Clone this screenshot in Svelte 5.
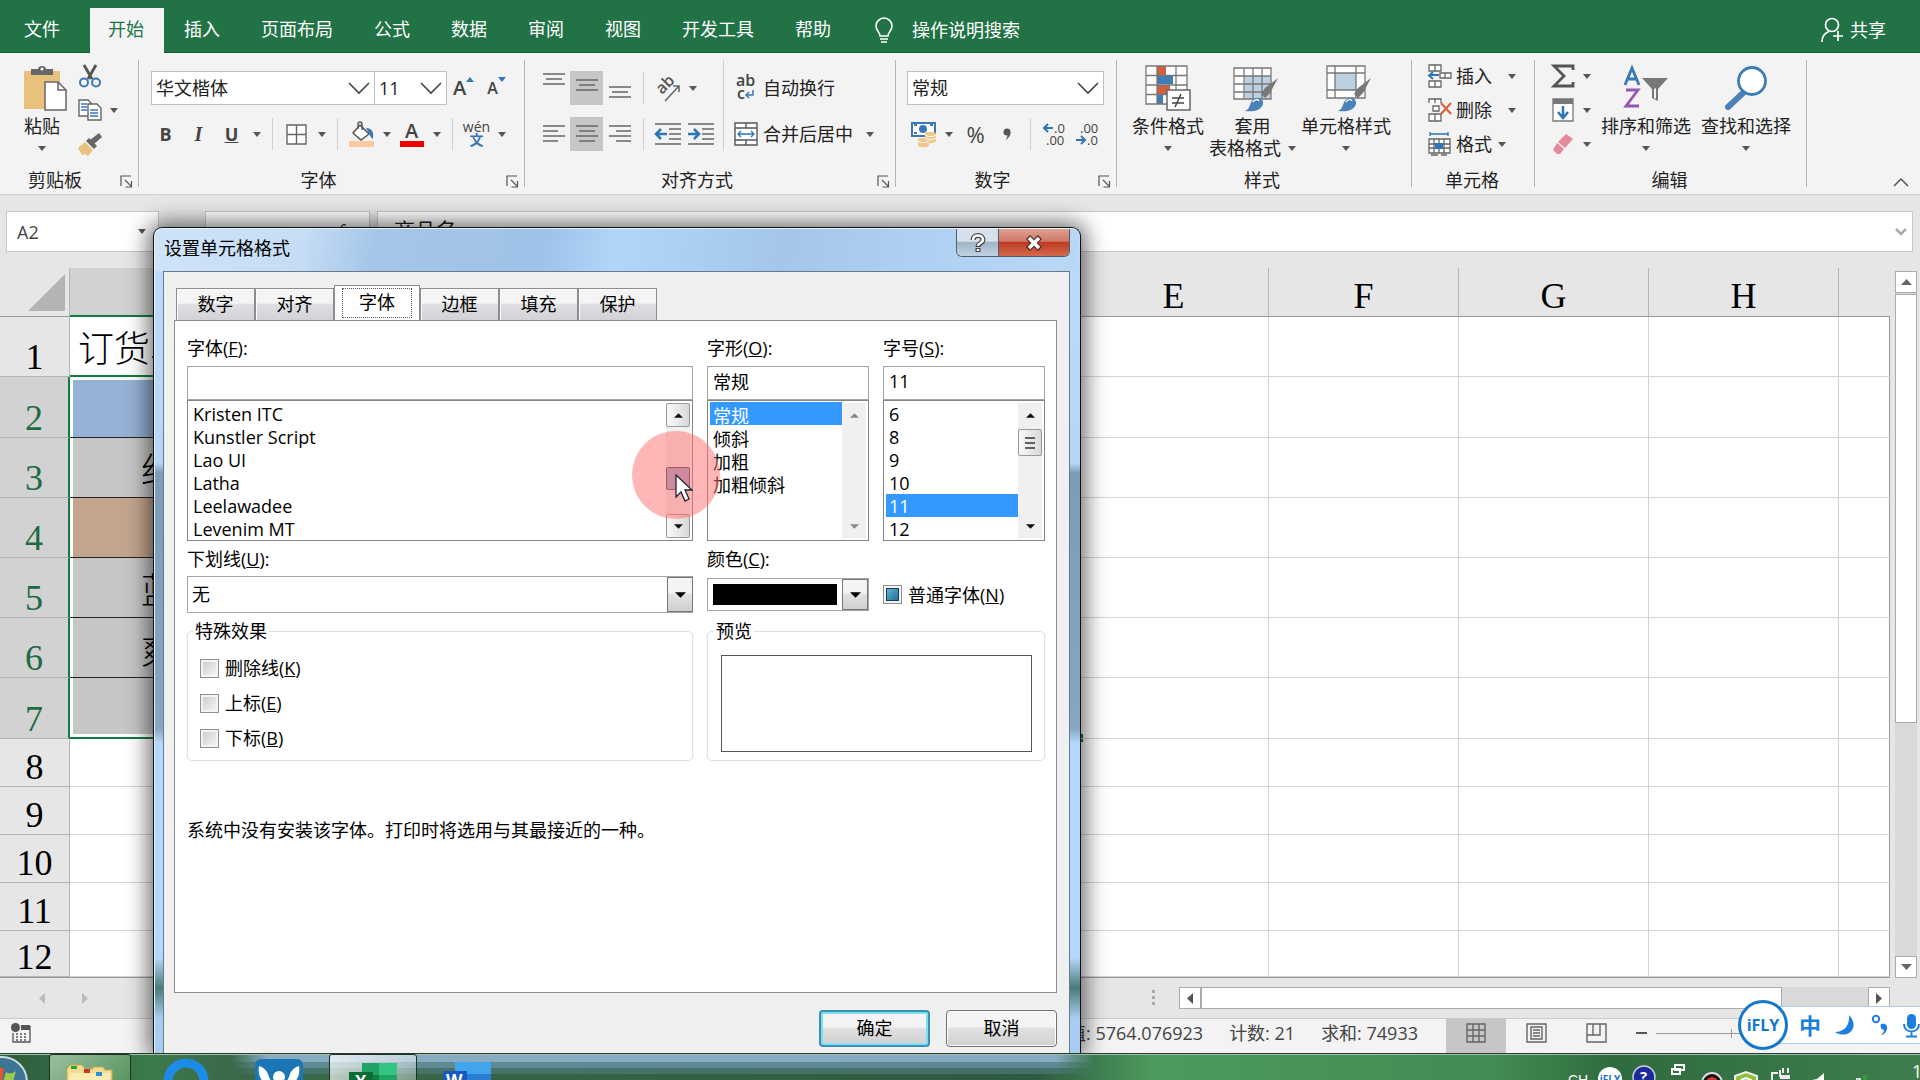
<script lang="ts">
  type Row = { n: number; height: number; text?: string; fill?: string }

  const menus = ['插入', '页面布局', '公式', '数据', '审阅', '视图', '开发工具', '帮助']
  const columns = ['A', 'B', 'C', 'D', 'E', 'F', 'G', 'H', '']
  const rows: Row[] = [
    { n: 1, height: 60, text: '订货单' },
    { n: 2, height: 61, fill: 'blue' },
    { n: 3, height: 60, text: '红', fill: 'gray' },
    { n: 4, height: 60, fill: 'tan' },
    { n: 5, height: 60, text: '蓝', fill: 'gray' },
    { n: 6, height: 60, text: '爽', fill: 'gray' },
    { n: 7, height: 61, fill: 'gray' },
    { n: 8, height: 48 },
    { n: 9, height: 48 },
    { n: 10, height: 48 },
    { n: 11, height: 48 },
    { n: 12, height: 46 }
  ]

  const dialogTabs = ['数字', '对齐', '字体', '边框', '填充', '保护']
  const fonts = ['Kristen ITC', 'Kunstler Script', 'Lao UI', 'Latha', 'Leelawadee', 'Levenim MT']
  const fontStyles = ['常规', '倾斜', '加粗', '加粗倾斜']
  const sizes = ['6', '8', '9', '10', '11', '12']
  const effects = [
    { id: 'strike', label: '删除线', key: 'K' },
    { id: 'super', label: '上标', key: 'E' },
    { id: 'sub', label: '下标', key: 'B' }
  ]

  let activeTab = $state('字体')
  let fontName = $state('')
  let fontStyle = $state('常规')
  let fontSize = $state('11')
</script>

{#snippet caret()}
  <svg class="caret" width="8" height="5" viewBox="0 0 8 5"><path d="M0 0h8L4 5z" fill="#555" /></svg>
{/snippet}

{#snippet drop(label: string)}
  <button class="drop" type="button" aria-label={label}>{@render caret()}</button>
{/snippet}

{#snippet chevron()}
  <svg width="22" height="13" viewBox="0 0 22 13"><path d="M1 1l10 10L21 1" fill="none" stroke="#444" stroke-width="1.6" /></svg>
{/snippet}

{#snippet launcher()}
  <button class="launcher" type="button" aria-label="更多设置">
    <svg width="13" height="13" viewBox="0 0 13 13" fill="none" stroke="#555" stroke-width="1.2"><path d="M1 11V1h10M5 5l6 6M11.5 6v6h-6" /></svg>
  </button>
{/snippet}

{#snippet lines(widths: number[], align: string)}
  <svg width="22" height="22" viewBox="0 0 22 22" stroke="#666" stroke-width="1.5">
    {#each widths as w, i}
      {@const x = align === 'left' ? 0 : align === 'right' ? 22 - w : (22 - w) / 2}
      <path d={`M${x} ${3 + i * 5}h${w}`} />
    {/each}
  </svg>
{/snippet}

{#snippet brush()}
  <path d="M45 13l-8 15-5 5-4-4 4-6z" fill="#777" />
  <path d="M12 46c6-2 4-9 9-12 4-3 10 0 9 5-2 7-11 8-18 7z" fill="#4a82b8" />
  <path d="M20 37c2-3 5-3 6-1" stroke="#fff" stroke-width="1.5" fill="none" />
{/snippet}

{#snippet scrollButton(dir: string)}
  <button class="sb-btn" type="button" aria-label={dir === 'up' ? '向上' : '向下'}>
    <svg width="9" height="5" viewBox="0 0 10 5"><path d={dir === 'up' ? 'M0 5h10L5 0z' : 'M0 0h10L5 5z'} fill="currentColor" /></svg>
  </button>
{/snippet}

<div class="desktop">
  <main class="window">
    <header class="menubar">
      <button class="menu file" type="button">文件</button>
      <button class="menu active" type="button">开始</button>
      <nav class="menus">
        {#each menus as menu}
          <button class="menu" type="button">{menu}</button>
        {/each}
      </nav>
      <button class="menu tell" type="button">
        <svg width="20" height="27" viewBox="0 0 20 27" fill="none" stroke="#fff" stroke-width="1.6">
          <path d="M6 19c0-4-4-5-4-10a8 8 0 0 1 16 0c0 5-4 6-4 10zM6 22h8M7 25h6" />
        </svg>
        操作说明搜索
      </button>
      <button class="menu share" type="button">
        <svg width="24" height="26" viewBox="0 0 24 26" fill="none" stroke="#fff" stroke-width="1.7">
          <circle cx="11" cy="8" r="6.5" /><path d="M1 25c0-6 3-9 7-10.5M17 14v10M12 19h10" />
        </svg>
        共享
      </button>
    </header>

    <section class="ribbon">
      <div class="group clipboard">
        <div class="body">
          <button class="big" type="button">
            <svg width="46" height="46" viewBox="0 0 46 46">
              <path d="M2 6h36v38H2z" fill="#e8c27c" />
              <path d="M9 10V4h7c0-4 8-4 8 0h7v6z" fill="#666" /><circle cx="20" cy="4" r="1.5" fill="#fff" />
              <path d="M23 17h13l8 8v20H23z" fill="#fff" stroke="#666" stroke-width="1.5" /><path d="M36 17v8h8" fill="none" stroke="#666" stroke-width="1.5" />
            </svg>
            <span>粘贴</span>
            <span>{@render caret()}</span>
          </button>
          <div class="stack">
            <button class="mini" type="button" aria-label="剪切">
              <svg width="24" height="24" viewBox="0 0 24 24" fill="none">
                <path d="M6 1l8 14M18 1l-8 14" stroke="#555" stroke-width="2.8" />
                <circle cx="6" cy="18.5" r="4" stroke="#3a78b5" stroke-width="2" /><circle cx="18" cy="18.5" r="4" stroke="#3a78b5" stroke-width="2" />
              </svg>
            </button>
            <button class="mini" type="button" aria-label="复制">
              <svg width="24" height="24" viewBox="0 0 24 24" fill="#fff" stroke="#666" stroke-width="1.4">
                <path d="M1 2h9l3 3v13H1z" /><path d="M3 6h6M3 9h6M3 12h6" stroke="#3a78b5" />
                <path d="M10 6h9l4 4v12H10z" /><path d="M12 12h8M12 15h8M12 18h8" stroke="#3a78b5" />
              </svg>
              {@render caret()}
            </button>
            <button class="mini" type="button" aria-label="格式刷">
              <svg width="24" height="24" viewBox="0 0 24 24"><path d="M21 1l3 4-8 7-4-4z" fill="#666" /><path d="M11 6l8 8-3 3-8-8z" fill="#666" /><path d="M7 10l8 8-5 6-3-2-3 1-4-7z" fill="#e8c27c" /></svg>
            </button>
          </div>
        </div>
        <footer>剪贴板{@render launcher()}</footer>
      </div>

      <div class="group font">
        <div class="body rows">
          <div class="row">
            <div class="combo face"><input aria-label="字体" value="华文楷体" /><button type="button" aria-label="展开字体">{@render chevron()}</button></div>
            <div class="combo size"><input aria-label="字号" value="11" /><button type="button" aria-label="展开字号">{@render chevron()}</button></div>
            <button class="tool grow" type="button">A<svg width="8" height="5" viewBox="0 0 8 5"><path d="M0 5h8L4 0z" fill="#3a78b5" /></svg></button>
            <button class="tool shrink" type="button">A<svg width="8" height="5" viewBox="0 0 8 5"><path d="M0 0h8L4 5z" fill="#3a78b5" /></svg></button>
          </div>
          <div class="row styling">
            <button class="tool" type="button"><b>B</b></button>
            <button class="tool italic" type="button"><i>I</i></button>
            <button class="tool" type="button"><b><u>U</u></b></button>
            {@render drop('下划线样式')}
            <span class="sep"></span>
            <button class="tool" type="button" aria-label="边框">
              <svg width="21" height="21" viewBox="0 0 21 21" fill="#fff" stroke="#666" stroke-width="1.4"><path d="M1 1h19v19H1zM10.5 1v19M1 10.5h19" /></svg>
            </button>
            {@render drop('边框样式')}
            <span class="sep"></span>
            <button class="tool" type="button" aria-label="填充颜色">
              <svg width="26" height="26" viewBox="0 0 26 26"><path d="M11 4l9 9-8 6-8-7z" fill="#fff" stroke="#555" stroke-width="1.5" /><path d="M9 8V3a2 2 0 0 1 4 0v6" fill="none" stroke="#555" stroke-width="1.4" /><path d="M17 7c6 0 8 4 7 11-2-1-3-3-4-6z" fill="#3a78b5" /><path d="M0 20h25v6H0z" fill="#f8cba4" /></svg>
            </button>
            {@render drop('选择填充颜色')}
            <button class="tool color" type="button"><span>A</span></button>
            {@render drop('选择字体颜色')}
            <span class="sep"></span>
            <button class="tool pinyin" type="button"><span>wén</span><em>文</em></button>
            {@render drop('拼音设置')}
          </div>
        </div>
        <footer>字体{@render launcher()}</footer>
      </div>

      <div class="group align">
        <div class="body">
          <div class="rows">
            <div class="row">
              <button class="tool top" type="button" aria-label="顶端对齐">{@render lines([22, 16, 22], 'center')}</button>
              <button class="tool on" type="button" aria-label="垂直居中">{@render lines([22, 16, 22], 'center')}</button>
              <button class="tool bottom" type="button" aria-label="底端对齐">{@render lines([22, 16, 22], 'center')}</button>
              <span class="sep"></span>
              <button class="tool" type="button" aria-label="方向">
                <svg width="26" height="26" viewBox="0 0 26 26"><text transform="translate(7 20) rotate(-45)" font-size="16" font-weight="600" fill="#555">ab</text><path d="M10 26L24 11M18 11h6v6" fill="none" stroke="#666" stroke-width="1.6" /></svg>
              </button>
              {@render drop('文字方向')}
            </div>
            <div class="row">
              <button class="tool" type="button" aria-label="左对齐">{@render lines([22, 15, 22, 15], 'left')}</button>
              <button class="tool on" type="button" aria-label="居中">{@render lines([22, 16, 22, 16], 'center')}</button>
              <button class="tool" type="button" aria-label="右对齐">{@render lines([22, 15, 22, 15], 'right')}</button>
              <span class="sep"></span>
              <button class="tool" type="button" aria-label="减少缩进量">
                <svg width="26" height="22" viewBox="0 0 26 22" fill="none"><path d="M0 1h26M14 6h12M14 11h12M14 16h12M0 21h26" stroke="#666" stroke-width="1.5" /><path d="M12 11H2M6 6l-5 5 5 5" stroke="#2e75b6" stroke-width="2.5" /></svg>
              </button>
              <button class="tool" type="button" aria-label="增加缩进量">
                <svg width="26" height="22" viewBox="0 0 26 22" fill="none"><path d="M0 1h26M14 6h12M14 11h12M14 16h12M0 21h26" stroke="#666" stroke-width="1.5" /><path d="M0 11h10M6 6l5 5-5 5" stroke="#2e75b6" stroke-width="2.5" /></svg>
              </button>
            </div>
          </div>
          <div class="rows wide">
            <button class="text-tool" type="button">
              <svg width="24" height="26" viewBox="0 0 24 26"><text x="2" y="11" font-size="16" fill="#444" font-weight="600">ab</text><text x="3" y="24" font-size="16" fill="#444" font-weight="600">c</text><path d="M19 15v5h-6M15 17l-3 3 3 3" fill="none" stroke="#3a78b5" stroke-width="1.5" /></svg>
              自动换行
            </button>
            <button class="text-tool" type="button">
              <svg width="24" height="24" viewBox="0 0 24 24" fill="#fff" stroke="#555" stroke-width="1.4"><path d="M1 1h22v22H1zM1 6h22M1 18h22M12 1v5M12 18v5" /><path d="M4 12h16M7 9l-3 3 3 3M17 9l3 3-3 3" fill="none" stroke="#2e75b6" /></svg>
              合并后居中
              {@render caret()}
            </button>
          </div>
        </div>
        <footer>对齐方式{@render launcher()}</footer>
      </div>

      <div class="group number">
        <div class="body rows">
          <div class="row">
            <div class="combo format"><input aria-label="数字格式" value="常规" /><button type="button" aria-label="展开格式">{@render chevron()}</button></div>
          </div>
          <div class="row">
            <button class="tool" type="button" aria-label="会计数字格式">
              <svg width="26" height="26" viewBox="0 0 26 26"><path d="M1 2h23v13H1z" fill="#fff" stroke="#3a78b5" stroke-width="2" /><circle cx="12" cy="8" r="4" fill="#3a78b5" /><path d="M3 4h3M3 12h3M19 4h3" stroke="#3a78b5" stroke-width="2" /><path d="M14 13c0-3 11-3 11 0v6c0 3-4 3-7 3v2c0 3-11 3-11 0v-5c0-2 4-2 7-2z" fill="#f0c78a" /><path d="M14 14c2 2 9 2 11 0M14 17c2 2 9 2 11 0M7 20c2 2 9 2 11 0" fill="none" stroke="#fff" /></svg>
            </button>
            {@render drop('货币')}
            <button class="tool percent" type="button">%</button>
            <button class="tool" type="button" aria-label="千位分隔样式">
              <svg width="8" height="12" viewBox="0 0 8 12"><circle cx="4" cy="4" r="3.5" fill="#555" /><path d="M7.5 4c0 4-2 6-5 8 1-2 2-3 2-5z" fill="#555" /></svg>
            </button>
            <span class="sep"></span>
            <button class="tool" type="button" aria-label="增加小数位数">
              <svg width="24" height="24" viewBox="0 0 24 24"><path d="M10 6H2M5 2L1 6l4 4" fill="none" stroke="#2e75b6" stroke-width="2" /><text x="11" y="11" font-size="13" fill="#444">.0</text><text x="3" y="23" font-size="13" fill="#444">.00</text></svg>
            </button>
            <button class="tool" type="button" aria-label="减少小数位数">
              <svg width="24" height="24" viewBox="0 0 24 24"><path d="M0 18h8M5 14l4 4-4 4" fill="none" stroke="#2e75b6" stroke-width="2" /><text x="4" y="11" font-size="13" fill="#444">.00</text><text x="11" y="23" font-size="13" fill="#444">.0</text></svg>
            </button>
          </div>
        </div>
        <footer>数字{@render launcher()}</footer>
      </div>

      <div class="group styles">
        <div class="body">
          <button class="big cond" type="button">
            <svg width="46" height="46" viewBox="0 0 46 46">
              <path d="M1 1h41v38H1z" fill="#fff" /><path d="M12 1h9v9h-9zM12 20h13v9H12z" fill="#d0603c" /><path d="M12 11h16v8H12zM12 30h6v9h-6z" fill="#3f7cb5" />
              <path d="M1 1h41v38H1zM1 10.5h41M1 20h41M1 29.5h41M12 1v38M31 1v38" fill="none" stroke="#777" stroke-width="1.3" />
              <path d="M22 25h23v20H22z" fill="#fff" stroke="#666" stroke-width="1.5" /><path d="M27 33h12M27 38h12M36 29l-6 13" stroke="#444" stroke-width="1.5" />
            </svg>
            <span>条件格式</span>
            <span>{@render caret()}</span>
          </button>
          <button class="big shifted" type="button">
            <svg width="46" height="46" viewBox="0 0 46 46">
              <path d="M1 3h37v31H1z" fill="#fff" /><path d="M12 11h26v23H12z" fill="#bcd0e2" />
              <path d="M1 3h37v31H1zM1 11h37M1 19h37M1 27h37M11 3v31M20 3v31M29 3v31" fill="none" stroke="#777" stroke-width="1.3" />
              {@render brush()}
            </svg>
            <span>套用</span>
            <span class="inline">表格格式{@render caret()}</span>
          </button>
          <button class="big shifted" type="button">
            <svg width="46" height="46" viewBox="0 0 46 46">
              <path d="M1 1h38v32H1z" fill="#fff" /><path d="M9 8h21v17H9z" fill="#bcd0e2" />
              <path d="M1 1h38v32H1zM9 1v32M30 1v32M1 8h38M1 25h38" fill="none" stroke="#777" stroke-width="1.3" />
              {@render brush()}
            </svg>
            <span>单元格样式</span>
            <span>{@render caret()}</span>
          </button>
        </div>
        <footer>样式</footer>
      </div>

      <div class="group cells">
        <div class="body stack">
          <button class="mini" type="button">
            <svg width="24" height="24" viewBox="0 0 24 24" fill="#fff" stroke="#666" stroke-width="1.3"><path d="M1 1h12v6H1zM7 1v6M1 17h12v6H1zM7 17v6M12 9h11v5H12zM17 9v5" /><path d="M11 11H2M5 8l-4 3.5 4 3.5" fill="none" stroke="#2e75b6" stroke-width="2" /></svg>
            <span>插入</span>{@render caret()}
          </button>
          <button class="mini" type="button">
            <svg width="24" height="24" viewBox="0 0 24 24" fill="#fff" stroke="#666" stroke-width="1.3"><path d="M1 5V1h12v4M7 1v4M1 16h12v7H1zM7 16v7M5 8h6v5H5z" /><path d="M13 5l10 11M23 5L13 16" stroke="#d9643e" stroke-width="2.2" /></svg>
            <span>删除</span>{@render caret()}
          </button>
          <button class="mini near" type="button">
            <svg width="24" height="24" viewBox="0 0 24 24" fill="#fff" stroke="#666" stroke-width="1.3"><path d="M1 7h21v14H1zM1 12h21M1 16h21M6 7v14M11 7v14M16 7v14M3 23h7M13 23h6" /><path d="M7 11h8v6H7z" fill="#2e75b6" stroke="none" /><path d="M2 2h18M2 0v4M20 0v4" stroke="#2e75b6" /></svg>
            <span>格式</span>{@render caret()}
          </button>
        </div>
        <footer>单元格</footer>
      </div>

      <div class="group edit">
        <div class="body">
          <div class="stack">
            <button class="mini" type="button" aria-label="自动求和">
              <svg width="24" height="24" viewBox="0 0 24 24"><path d="M22 6V2H3l10 10L3 22h19v-4" fill="none" stroke="#555" stroke-width="2.8" /></svg>
              {@render caret()}
            </button>
            <button class="mini" type="button" aria-label="填充">
              <svg width="24" height="24" viewBox="0 0 24 24"><path d="M2 1h20v22H2z" fill="#fff" stroke="#777" stroke-width="1.3" /><path d="M2 1h20v5H2z" fill="#777" /><path d="M12 8v12M7 14l5 6 5-6" fill="none" stroke="#2e75b6" stroke-width="2.5" /></svg>
              {@render caret()}
            </button>
            <button class="mini" type="button" aria-label="清除">
              <svg width="24" height="24" viewBox="0 0 24 24"><path d="M15 2l7 5-8 9-7-6z" fill="#e58a99" /><path d="M6 11l7 6-4 5H6l-4-4z" fill="#e58a99" /></svg>
              {@render caret()}
            </button>
          </div>
          <button class="big" type="button">
            <svg width="46" height="46" viewBox="0 0 46 46" fill="none"><path d="M2 20L9 3l7 17M5 14h8" stroke="#3a78b5" stroke-width="2.8" /><path d="M3 25h12L3 41h13" stroke="#9455b5" stroke-width="2.8" /><path d="M19 13h26L35 24v12l-6-3v-9z" fill="#777" /><path d="M31 24v9l2 1V23z" fill="#f3f3f3" /></svg>
            <span>排序和筛选</span>
            <span>{@render caret()}</span>
          </button>
          <button class="big" type="button">
            <svg width="46" height="46" viewBox="0 0 46 46"><path d="M20 28L5 42" stroke="#4a82b8" stroke-width="6" stroke-linecap="round" /><circle cx="29" cy="16" r="13.5" fill="#fff" stroke="#3f7cb5" stroke-width="2.8" /></svg>
            <span>查找和选择</span>
            <span>{@render caret()}</span>
          </button>
        </div>
        <footer>编辑</footer>
      </div>
      <button class="collapse" type="button" aria-label="折叠功能区">
        <svg width="16" height="9" viewBox="0 0 16 9"><path d="M1 8l7-7 7 7" fill="none" stroke="#555" stroke-width="1.5" /></svg>
      </button>
    </section>

    <section class="formula-bar">
      <div class="name-box"><input aria-label="名称框" value="A2" /><button type="button" aria-label="名称列表">{@render caret()}</button></div>
      <button class="fx" type="button">f</button>
      <div class="formula">
        <input aria-label="编辑栏" value="商品名" />
        <button type="button" aria-label="展开编辑栏"><svg width="12" height="8" viewBox="0 0 12 8"><path d="M1 1l5 5 5-5" fill="none" stroke="#aaa" stroke-width="2.5" /></svg></button>
      </div>
    </section>

    <section class="sheet">
      <div class="grid">
        <table>
          <colgroup>
            <col class="c-head" /><col class="c-first" />
            {#each columns.slice(1, 8) as _}<col class="c-cell" />{/each}
            <col />
          </colgroup>
          <thead>
            <tr>
              <th class="corner" aria-label="全选"><svg width="37" height="37" viewBox="0 0 37 37"><path d="M37 0v37H0z" fill="#b4b4b4" /></svg></th>
              {#each columns as col, i}
                <th class:picked={i < 4}>{col}</th>
              {/each}
            </tr>
          </thead>
          <tbody>
            {#each rows as row}
              <tr style={`height:${row.height}px`}>
                <th class:picked={row.fill}>{row.n}</th>
                {#each columns as col, i}
                  <td
                    class={i < 4 && row.fill ? `sel ${row.fill}` : ''}
                    class:first={i === 0 && row.fill}
                    class:above={i < 4 && row.n === 1}
                    class:last={i < 4 && row.n === 7}
                    class:title={row.n === 1}
                  >
                    {i === 0 ? (row.text ?? '') : ''}
                    {#if i === 3 && row.n === 7}<span class="handle"></span>{/if}
                  </td>
                {/each}
              </tr>
            {/each}
          </tbody>
        </table>
      </div>
      <div class="vscroll">
        <button type="button" aria-label="向上滚动"><svg width="11" height="6" viewBox="0 0 11 6"><path d="M0 6h11L5.5 0z" fill="#666" /></svg></button>
        <span class="thumb"></span>
        <span class="track"></span>
        <button type="button" aria-label="向下滚动"><svg width="11" height="6" viewBox="0 0 11 6"><path d="M0 0h11L5.5 6z" fill="#666" /></svg></button>
      </div>
    </section>

    <section class="sheet-tabs">
      <div class="nav">
        <button type="button" aria-label="上一张"><svg width="6" height="11" viewBox="0 0 6 11"><path d="M6 0v11L0 5.5z" fill="#bbb" /></svg></button>
        <button type="button" aria-label="下一张"><svg width="6" height="11" viewBox="0 0 6 11"><path d="M0 0v11l6-5.5z" fill="#bbb" /></svg></button>
      </div>
      <div class="hscroll">
        <svg class="dots" width="4" height="16" viewBox="0 0 4 16" fill="#aaa"><path d="M0 0h3v3H0zM0 6h3v3H0zM0 12h3v3H0z" /></svg>
        <button type="button" aria-label="向左滚动"><svg width="6" height="11" viewBox="0 0 6 11"><path d="M6 0v11L0 5.5z" fill="#555" /></svg></button>
        <span class="thumb"></span>
        <span class="track"></span>
        <button type="button" aria-label="向右滚动"><svg width="6" height="11" viewBox="0 0 6 11"><path d="M0 0v11l6-5.5z" fill="#555" /></svg></button>
      </div>
    </section>

    <section class="status">
      <svg class="macro" width="20" height="20" viewBox="0 0 20 20"><circle cx="4.5" cy="4.5" r="4.5" fill="#555" /><path d="M10 2h9v5h-9z" fill="#555" /><path d="M2 10v9h17V3" fill="none" stroke="#555" stroke-width="1.3" /><path d="M5 11h2M9 11h2M13 11h2M5 14h2M9 14h2M13 14h2M5 17h2M9 17h2M13 17h2" stroke="#555" stroke-width="1.5" /></svg>
      <div class="figures">
        <span>平均值: 5764.076923</span>
        <span>计数: 21</span>
        <span>求和: 74933</span>
      </div>
      <div class="views">
        <button class="on" type="button" aria-label="普通"><svg width="20" height="20" viewBox="0 0 20 20" fill="none" stroke="#666" stroke-width="1.4"><path d="M1 1h18v18H1zM7 1v18M13 1v18M1 7h18M1 13h18" /></svg></button>
        <button type="button" aria-label="页面布局"><svg width="21" height="20" viewBox="0 0 21 20" fill="none" stroke="#666" stroke-width="1.4"><path d="M1 1h19v18H1zM5 4h11v12H5zM7 7h7M7 10h7M7 13h7" /></svg></button>
        <button type="button" aria-label="分页预览"><svg width="21" height="20" viewBox="0 0 21 20" fill="none" stroke="#666" stroke-width="1.4"><path d="M1 1h19v18H1zM1 12h13V1M7 1v11" /></svg></button>
      </div>
      <div class="zoom">
        <button type="button" aria-label="缩小"><svg width="11" height="3" viewBox="0 0 11 3"><path d="M0 1h11" stroke="#555" stroke-width="2" /></svg></button>
        <svg width="90" height="10" viewBox="0 0 90 10" stroke="#999"><path d="M0 5.5h90M75.5 1v9" /></svg>
      </div>
    </section>

    <div class="dialog" role="dialog" aria-labelledby="dlg-title">
      <div class="titlebar">
        <span id="dlg-title">设置单元格格式</span>
        <div class="caption">
          <button class="help" type="button" aria-label="帮助">
            <svg width="16" height="20" viewBox="0 0 16 20" fill="none"><path d="M3 7c0-6 10-6 10 0 0 3-5 3-5 7M8 15v4" stroke="#444" stroke-width="5" /><path d="M3 7c0-6 10-6 10 0 0 3-5 3-5 6M8 16v2" stroke="#fff" stroke-width="2.6" /></svg>
          </button>
          <button class="close" type="button" aria-label="关闭">
            <svg width="18" height="16" viewBox="0 0 18 16"><path d="M3 2l12 12M15 2L3 14" stroke="#533" stroke-width="6" /><path d="M4 3l10 10M14 3L4 13" stroke="#fff" stroke-width="3.5" /></svg>
          </button>
        </div>
      </div>
      <div class="content">
        <div class="tabs" role="tablist">
          {#each dialogTabs as tab}
            <button type="button" role="tab" aria-selected={tab === activeTab} class:current={tab === activeTab} onclick={() => (activeTab = tab)}><span>{tab}</span></button>
          {/each}
        </div>
        <div class="panel">
          <div class="form">
            <div class="field">
              <label for="f-name">字体(<u>F</u>):</label>
              <input id="f-name" type="text" bind:value={fontName} />
              <div class="list">
                <select size="6" aria-label="字体列表">
                  {#each fonts as f}<option>{f}</option>{/each}
                </select>
                <div class="sb live">
                  {@render scrollButton('up')}
                  <span class="sb-thumb dark"></span>
                  {@render scrollButton('down')}
                </div>
              </div>
            </div>
            <div class="field">
              <label for="f-style">字形(<u>O</u>):</label>
              <input id="f-style" type="text" bind:value={fontStyle} />
              <div class="list">
                <select size="6" aria-label="字形列表" bind:value={fontStyle}>
                  {#each fontStyles as s}<option value={s}>{s}</option>{/each}
                </select>
                <div class="sb off">{@render scrollButton('up')}{@render scrollButton('down')}</div>
              </div>
            </div>
            <div class="field">
              <label for="f-size">字号(<u>S</u>):</label>
              <input id="f-size" type="text" bind:value={fontSize} />
              <div class="list">
                <select size="6" aria-label="字号列表" bind:value={fontSize}>
                  {#each sizes as s}<option value={s}>{s}</option>{/each}
                </select>
                <div class="sb">
                  {@render scrollButton('up')}
                  <span class="sb-thumb"><svg width="10" height="12" viewBox="0 0 10 12" stroke="#333" stroke-width="1.5"><path d="M0 1h10M0 6h10M0 11h10" /></svg></span>
                  {@render scrollButton('down')}
                </div>
              </div>
            </div>

            <div class="field">
              <label for="f-under">下划线(<u>U</u>):</label>
              <div class="dropdown">
                <select id="f-under"><option>无</option></select>
                <span class="face"><svg width="11" height="6" viewBox="0 0 12 6"><path d="M0 0h12L6 6z" /></svg></span>
              </div>
            </div>
            <div class="field">
              <label for="f-color">颜色(<u>C</u>):</label>
              <button id="f-color" class="color-pick" type="button">
                <span class="swatch"></span>
                <span class="face"><svg width="11" height="6" viewBox="0 0 12 6"><path d="M0 0h12L6 6z" /></svg></span>
              </button>
            </div>
            <label class="check normal"><input class="mixed" type="checkbox" /><span>普通字体(<u>N</u>)</span></label>

            <fieldset>
              <legend>特殊效果</legend>
              {#each effects as e (e.id)}
                <label class="check"><input type="checkbox" /><span>{e.label}(<u>{e.key}</u>)</span></label>
              {/each}
            </fieldset>
            <fieldset class="preview">
              <legend>预览</legend>
              <div class="sample"></div>
            </fieldset>
          </div>
          <p>系统中没有安装该字体。打印时将选用与其最接近的一种。</p>
        </div>
        <div class="actions">
          <button class="ok" type="button">确定</button>
          <button type="button">取消</button>
        </div>
      </div>
      <span class="halo"></span>
      <svg class="pointer" width="18" height="28" viewBox="0 0 18 28"><path d="M1 1v22l5-5 4 9 4-2-4-9h7z" fill="#fff" stroke="#223" stroke-width="1.3" /></svg>
    </div>
  </main>

  <footer class="taskbar">
    <button class="orb" type="button" aria-label="开始菜单"><svg width="30" height="28" viewBox="0 0 30 28"><circle cx="2" cy="28" r="25" fill="#3d7594" stroke="#c9dbe4" stroke-width="2" /><path d="M0 13l4 2-2 12-6-2z" fill="#e2572b" /><path d="M6 18c5 3 7 1 10-1l-4 14H2z" fill="#9ccb4a" /></svg></button>
    <button class="task open pair" type="button" aria-label="资源管理器">
      <svg width="48" height="24" viewBox="0 0 48 24"><path d="M1 24V6l3-4h12l3 4h8V4h10l2 3h7v17z" fill="#f2dc93" stroke="#c9a750" /><path d="M4 10h40v14H2z" fill="#f9ebb2" /><path d="M5 3h6v3H5z" fill="#2ca52c" /><path d="M18 6h6v4h-6z" fill="#c23b22" /><path d="M30 9h6v4h-6z" fill="#2f8fd0" /></svg>
    </button>
    <button class="task" type="button" aria-label="浏览器"><svg width="48" height="24" viewBox="0 0 48 24"><circle cx="24" cy="22" r="18" fill="none" stroke="#1e8be8" stroke-width="9" /></svg></button>
    <button class="task" type="button" aria-label="飞翼"><svg width="48" height="24" viewBox="0 0 48 24"><rect width="48" height="40" rx="6" fill="#1a76b5" /><circle cx="24" cy="18" r="6" fill="#fff" /><path d="M4 7c6 2 9 6 10 11l3 6H9C4 19 3 13 4 7zM44 7c-6 2-9 6-10 11l-3 6h8c5-5 6-11 5-17z" fill="#fff" /></svg></button>
    <button class="task open" type="button" aria-label="Excel"><svg width="48" height="24" viewBox="0 0 48 24"><path d="M13 0h35v24H13z" fill="#21a366" /><path d="M30 0h18v12H30z" fill="#33c481" /><path d="M13 12h17v12H13z" fill="#107c41" /><rect y="9" width="24" height="24" fill="#0b6b37" /><text x="6" y="25" font-size="17" font-weight="700" fill="#fff">X</text></svg></button>
    <button class="task" type="button" aria-label="Word"><svg width="48" height="24" viewBox="0 0 48 24"><path d="M12 0h36v12H12z" fill="#41a5ee" /><path d="M12 12h36v12H12z" fill="#2b7cd3" /><rect y="9" width="24" height="24" fill="#185abd" /><text x="3" y="25" font-size="17" font-weight="700" fill="#fff">W</text></svg></button>
    <div class="tray">
      <span class="lang">CH</span>
      <span class="badge">iFLY</span>
      <svg width="24" height="18" viewBox="0 0 24 18"><circle cx="12" cy="14" r="11" fill="#1c2b9c" stroke="#ccd" stroke-width="1.5" /><text x="8" y="19" font-size="15" font-weight="700" fill="#fff">?</text></svg>
      <svg width="24" height="18" viewBox="-5 -1 24 18" fill="none" stroke="#fff" stroke-width="2"><path d="M4 1h9v5H4zM1 5h8v5H1z" /></svg>
      <svg width="24" height="18" viewBox="0 0 24 18"><circle cx="12" cy="20" r="10" fill="#111" stroke="#ddd" stroke-width="2" /><circle cx="12" cy="20" r="6" fill="#d33" /></svg>
      <svg width="24" height="18" viewBox="0 0 24 18"><path d="M1 13l11-4 11 4v12H1z" fill="#8fbf3a" stroke="#eee" stroke-width="2" /><path d="M7 17l5-2 5 2v6" fill="none" stroke="#fff" stroke-width="2" /></svg>
      <svg width="28" height="18" viewBox="-3 -1 28 18" fill="none" stroke="#eee" stroke-width="2"><path d="M1 18V9h6M9 6v6h10M12 4v5M17 4v5M9 14h10" /></svg>
      <svg width="28" height="18" viewBox="-5 -3 28 18"><path d="M1 14l5-1 7-6v11H1z" fill="#fff" /></svg>
      <svg width="28" height="18" viewBox="-4 -3 28 18"><path d="M1 15h5v3H1zM8 12h5v6H8z" fill="#ddd" /><path d="M15 9h4v9h-4z" fill="#394" /></svg>
      <span class="clock">1</span>
    </div>
  </footer>

  <div class="ime">
    <span class="logo">iFLY</span>
    <span class="mode">中</span>
    <svg width="22" height="22" viewBox="0 0 22 22"><path d="M14 1c12 13-2 25-14 17 9 0 15-6 14-17z" fill="#1c7fe0" /></svg>
    <svg width="18" height="22" viewBox="0 0 18 22"><circle cx="5" cy="5" r="3.2" fill="none" stroke="#1c7fe0" stroke-width="2" /><path d="M10 10c3-1 7 0 6 5-1 4-4 6-6 6 2-2 3-3 3-5-3 0-4-4-3-6z" fill="#1c7fe0" /></svg>
    <svg width="16" height="25" viewBox="0 0 16 25"><rect x="4" y="1" width="9" height="15" rx="4.5" fill="#1c7fe0" /><path d="M1 11c0 10 15 10 15 0M8.5 18v5M3 23.5h11" fill="none" stroke="#1c7fe0" stroke-width="2" /></svg>
  </div>
</div>

<style>
  :global(body) {
    margin: 0;
    overflow: hidden;
  }

  .desktop {
    --border: #ababab;
    position: relative;
    display: flex;
    flex-direction: column;
    min-height: 100vh;
    overflow: hidden;
    font-family: 'Open Sans', 'Noto Sans CJK SC', sans-serif;
    font-size: 18px;
    line-height: 22px;
    color: #222;
  }

  .desktop *,
  .desktop *::after {
    box-sizing: border-box;
  }

  button,
  input,
  select {
    margin: 0;
    padding: 0;
    border: 0;
    border-radius: 0;
    background: transparent;
    font: inherit;
    color: inherit;
    outline: none;
  }

  button {
    display: inline-flex;
    align-items: center;
    justify-content: center;
    white-space: nowrap;
  }

  input {
    min-width: 0;
  }

  svg {
    display: block;
    flex: none;
    overflow: visible;
  }

  .window {
    position: relative;
    display: flex;
    flex: 1;
    flex-direction: column;
    background: #e6e6e6;
  }

  /* menu bar */
  .menubar {
    display: flex;
    align-items: flex-end;
    height: 53px;
    background: #217346;
    border-bottom: 1px solid #185c37;
  }

  .menu {
    height: 44px;
    padding: 0 20px 2px;
    color: #fff;
  }

  .menu.file {
    padding: 0 30px 2px 24px;
  }

  .menu.active {
    height: 45px;
    margin-bottom: -1px;
    padding: 0 20px 3px 18px;
    background: #f3f3f3;
    color: #217346;
  }

  .menus {
    display: flex;
    gap: 1px;
  }

  .menu.tell {
    gap: 18px;
    padding: 0 20px 0 23px;
  }

  .menu.share {
    gap: 5px;
    margin-left: auto;
    padding: 0 34px;
  }

  /* ribbon */
  .ribbon {
    display: flex;
    padding: 7px 0;
    background: #f3f3f3;
    border-bottom: 1px solid #cfcfcf;
  }

  .group {
    display: flex;
    flex: none;
    flex-direction: column;
    height: 127px;
    padding: 0 10px 0 12px;
    border-right: 1px solid #b5b5b5;
  }

  .group footer {
    position: relative;
    margin-top: auto;
    padding-right: 28px;
    line-height: 14px;
    text-align: center;
  }

  .launcher {
    position: absolute;
    right: -5px;
    bottom: -1px;
  }

  .body {
    display: flex;
  }

  .clipboard {
    width: 139px;
    padding-left: 22px;
  }

  .clipboard footer {
    padding-right: 40px;
  }

  .group.font {
    width: 386px;
  }

  .group.align {
    width: 371px;
  }

  .group.number {
    width: 221px;
    padding-left: 11px;
  }

  .group.styles {
    width: 295px;
  }

  .styles footer,
  .edit footer {
    padding-right: 6px;
  }

  .cells footer {
    padding-right: 8px;
  }

  .group.styles .body {
    gap: 5px;
  }

  .group.cells {
    width: 123px;
    padding-left: 16px;
  }

  .group.edit {
    width: 272px;
    padding-left: 16px;
    padding-right: 12px;
  }

  .group.edit .body {
    gap: 10px;
  }

  .body.rows,
  .rows {
    display: flex;
    flex-direction: column;
    gap: 12px;
    padding-top: 5px;
  }

  .body.rows,
  .align .rows {
    padding-top: 11px;
  }

  .row {
    display: flex;
    align-items: center;
    height: 34px;
  }

  .styling {
    margin-left: -2px;
  }

  .tool {
    width: 33px;
    height: 34px;
    color: #444;
  }

  .tool.on {
    background: #c6c6c6;
  }

  .tool.top {
    padding-bottom: 12px;
  }

  .tool.bottom {
    padding-top: 14px;
  }

  .tool.grow,
  .tool.shrink {
    font-size: 20px;
    font-weight: 600;
  }

  .tool.shrink {
    font-size: 16px;
  }

  .tool.grow svg,
  .tool.shrink svg {
    align-self: flex-start;
    margin-top: 6px;
  }

  .tool.italic {
    font-family: 'Liberation Serif', serif;
    font-size: 20px;
    font-weight: 700;
  }

  .tool.color span {
    width: 24px;
    border-bottom: 6px solid #f00000;
    font-size: 20px;
    font-weight: 600;
    line-height: 20px;
  }

  .tool.pinyin {
    flex-direction: column;
    font-size: 14px;
    line-height: 12px;
  }

  .pinyin em {
    color: #3a78b5;
    font-style: normal;
    font-weight: 700;
    line-height: 14px;
  }

  .tool.percent {
    padding-left: 4px;
    font-size: 22px;
  }

  .drop {
    width: 17px;
    height: 34px;
  }

  .sep {
    width: 1px;
    height: 32px;
    margin: 0 7px;
    background: #d0d0d0;
  }

  .combo {
    display: flex;
    height: 34px;
    background: #fff;
    border: 1px solid #c0c0c0;
  }

  .combo input {
    flex: 1;
    padding-left: 4px;
  }

  .combo button {
    width: 30px;
  }

  .combo.face {
    width: 224px;
  }

  .combo.size {
    width: 73px;
    margin-left: -1px;
  }

  .combo.format {
    width: 197px;
  }

  .rows.wide {
    margin-left: 6px;
    padding-left: 10px;
    border-left: 1px solid #d0d0d0;
  }

  .align .rows:first-child {
    width: 180px;
  }

  .text-tool {
    justify-content: flex-start;
    gap: 5px;
    height: 34px;
  }

  .text-tool .caret {
    margin-left: 8px;
  }

  .big {
    flex-direction: column;
    justify-content: flex-start;
    min-width: 40px;
    padding-top: 5px;
  }

  .big svg:first-child {
    margin-bottom: 4px;
  }

  .big span {
    display: flex;
    align-items: center;
    justify-content: center;
    height: 22px;
  }

  .big span .caret {
    margin-bottom: 0;
  }

  .big .inline .caret {
    margin-left: 7px;
  }

  .cond {
    padding-left: 3px;
  }

  .shifted > svg:first-child {
    margin-left: 6px;
  }

  .stack {
    display: flex;
    flex-direction: column;
    gap: 4px;
    padding-top: 1px;
  }

  .clipboard .stack {
    margin-left: 10px;
  }

  .clipboard .big span {
    margin-right: 6px;
  }

  .mini {
    justify-content: flex-start;
    gap: 8px;
    height: 30px;
  }

  .cells .mini {
    gap: 4px;
  }

  .cells .mini .caret {
    margin-left: 12px;
  }

  .cells .near .caret {
    margin-left: 2px;
  }

  .collapse {
    align-self: flex-end;
    margin-left: auto;
    padding: 0 11px 0 0;
  }

  /* formula bar */
  .formula-bar {
    display: flex;
    height: 73px;
    padding: 16px 7px 16px 6px;
  }

  .name-box,
  .formula,
  .fx {
    display: flex;
    background: #fff;
    border: 1px solid #c8c8c8;
  }

  .name-box {
    width: 153px;
  }

  .name-box input {
    width: 120px;
    padding-left: 10px;
    color: #444;
  }

  .name-box button {
    width: 30px;
  }

  .fx {
    width: 165px;
    margin: 0 7px 0 46px;
    padding-left: 106px;
    font-family: 'Liberation Serif', serif;
    font-size: 20px;
    font-style: italic;
    line-height: 20px;
  }

  .formula {
    flex: 1;
  }

  .formula input {
    flex: 1;
    padding: 0 0 4px 16px;
    font-size: 21px;
  }

  .formula button {
    width: 22px;
  }

  /* sheet */
  .sheet {
    display: flex;
    flex: 1;
  }

  .grid {
    flex: 1;
    overflow: hidden;
    border-bottom: 1px solid #999;
  }

  table {
    width: 100%;
    height: 100%;
    table-layout: fixed;
    border-collapse: separate;
    border-spacing: 0;
    background: #fff;
  }

  .c-head {
    width: 70px;
  }

  .c-first {
    width: 439px;
  }

  .c-cell {
    width: 190px;
  }

  th,
  td {
    padding: 0;
    border: 0 solid #d4d4d4;
    border-width: 0 1px 1px 0;
  }

  th {
    padding-bottom: 1px;
    background: #e6e6e6;
    border-color: #b5b5b5;
    font: 36px/36px 'Liberation Serif', serif;
    vertical-align: bottom;
    color: #000;
  }

  thead th {
    height: 49px;
    padding-bottom: 2px;
    border-bottom-color: #999;
  }

  thead th:last-child {
    border-right: 0;
  }

  thead .picked,
  tbody .picked {
    background: #d2d2d2;
    color: #1d6b42;
  }

  thead .picked {
    border-bottom: 2px solid #107c41;
  }

  tbody .picked {
    border-right: 2px solid #107c41;
  }

  .corner svg {
    margin: 0 0 3px 28px;
  }

  td {
    position: relative;
    padding-left: 71px;
    font: 36px/40px 'Noto Sans CJK SC', sans-serif;
    font-weight: 300;
    white-space: nowrap;
    color: #000;
  }

  td:last-child {
    border-right-color: #999;
  }

  td.title {
    padding-left: 8px;
  }

  td.above {
    border-bottom: 2px solid #107c41;
  }

  td.sel {
    border-right-color: #222;
    border-bottom-color: #222;
  }

  td.gray {
    background: #c6c6c6;
  }

  td.blue {
    background: #95b1d6;
  }

  td.tan {
    background: #c3a58c;
  }

  td.first {
    box-shadow: inset 3px 0 #fff;
  }

  td.first.blue {
    box-shadow: inset 3px 3px #fff;
  }

  td.last {
    border-bottom: 2px solid #107c41;
  }

  td.first.last {
    box-shadow: inset 3px -3px #fff;
  }

  .handle {
    position: absolute;
    right: -5px;
    bottom: -5px;
    width: 8px;
    height: 8px;
    background: #107c41;
  }

  .vscroll {
    display: flex;
    flex-direction: column;
    width: 22px;
    margin: 3px 3px 0 5px;
    background: #d9d9d9;
  }

  .vscroll button,
  .vscroll .thumb,
  .hscroll button,
  .hscroll .thumb {
    background: #fff;
    border: 1px solid var(--border);
  }

  .vscroll button {
    height: 22px;
  }

  .vscroll .thumb {
    flex: 427;
    margin-top: 1px;
  }

  .vscroll .track {
    flex: 233;
  }

  .sheet-tabs {
    display: flex;
    align-items: center;
    height: 40px;
  }

  .nav {
    display: flex;
    gap: 37px;
    padding-left: 39px;
  }

  .hscroll {
    display: flex;
    flex: 1;
    align-items: center;
    height: 22px;
    margin: 0 30px 0 1064px;
  }

  .hscroll button {
    width: 22px;
    height: 22px;
  }

  .hscroll .dots {
    margin-right: 23px;
  }

  .hscroll .thumb {
    flex: 581;
    height: 22px;
  }

  .hscroll .track {
    flex: 86;
    height: 22px;
    background: #d9d9d9;
  }

  .status {
    display: flex;
    align-items: center;
    height: 35px;
    padding-left: 11px;
    background: #f3f3f3;
    border-top: 1px solid #c8c8c8;
    color: #444;
  }

  .macro,
  .figures,
  .zoom {
    margin-bottom: 6px;
  }

  .figures {
    display: flex;
    gap: 26px;
    margin-left: auto;
  }

  .views {
    display: flex;
    align-self: stretch;
    margin-left: 28px;
  }

  .views button {
    width: 60px;
    padding-bottom: 6px;
  }

  .views .on {
    background: #c6c6c6;
  }

  .zoom {
    display: flex;
    gap: 9px;
    width: 294px;
    padding-left: 10px;
  }

  /* dialog */
  .dialog {
    position: absolute;
    top: 227px;
    bottom: 0;
    left: 153px;
    display: flex;
    flex-direction: column;
    width: 928px;
    padding: 0 10px 0 9px;
    background: linear-gradient(#bcdcfb 0, #b6d6f6 235px, #7c9cb8 245px, #86a6c2 500px, #b4d8fb 515px, #b4d8fb 730px, #4a7a78 760px, #a8cdf0 790px);
    border: 1px solid #111;
    border-bottom: 0;
    border-radius: 9px 9px 0 0;
    box-shadow:
      inset 1px 1px #e6f3ff,
      0 0 22px 4px rgba(0, 0, 0, 0.6);
    color: #000;
  }

  .titlebar {
    display: flex;
    justify-content: space-between;
    height: 42px;
    margin: 1px -9px 0 -8px;
    padding: 0 9px;
    border-radius: 8px 8px 0 0;
    background: linear-gradient(100deg, #cfe3f8 0, #c6ddf5 16%, #a5c6e8 24%, #9fc2e8 42%, #b2d6fa 50%, #a3c6ea 68%, #aed0f2 82%, #b8d8f6 100%);
  }

  .titlebar > span {
    padding-top: 8px;
  }

  .caption {
    display: flex;
    height: 28px;
    border: 1px solid #4c5d6f;
    border-top: 0;
    border-radius: 0 0 6px 6px;
    overflow: hidden;
  }

  .help {
    width: 42px;
    background: linear-gradient(#d5e0ea 45%, #a2b5c8 50%, #c0d2e2);
    border-right: 1px solid #4c5d6f;
  }

  .close {
    width: 70px;
    background: linear-gradient(#dfa090 0, #d07a69 45%, #bc3b20 50%, #d46a4e);
  }

  .content {
    display: flex;
    flex: 1;
    flex-direction: column;
    padding: 13px 12px 6px 10px;
    background: #f0f0f0;
    border: 1px solid #69788a;
    border-bottom: 0;
  }

  .tabs {
    display: flex;
    align-items: flex-end;
    padding-left: 2px;
    height: 35px;
  }

  .tabs button {
    width: 79px;
    height: 32px;
    padding-bottom: 2px;
    background: linear-gradient(#f4f4f4 45%, #e0e0e4 50%, #d2d2d6);
    border: 1px solid #8a8d92;
    border-bottom: 0;
    box-shadow: inset 1px 1px #fcfcfc;
  }

  .tabs .current {
    width: 86px;
    height: 36px;
    margin-bottom: -1px;
    background: #fff;
  }

  .tabs .current span {
    padding: 2px 16px 4px;
    border: 1px dotted #555;
  }

  .panel {
    flex: 1;
    padding: 15px 11px 0 12px;
    background: #fff;
    border: 1px solid #8a8d92;
  }

  .form {
    display: grid;
    grid-template-columns: 1fr 162px 162px;
    column-gap: 14px;
    row-gap: 6px;
  }

  .field {
    display: flex;
    flex-direction: column;
  }

  .field label {
    line-height: 24px;
    margin-bottom: 6px;
  }

  .field input {
    width: 100%;
    height: 34px;
    padding: 0 0 5px 5px;
    border: 1px solid #a5a5a5;
  }

  .list {
    display: flex;
    height: 141px;
    padding: 1px 2px;
    border: 1px solid #858585;
  }

  .list select {
    flex: 1;
    height: 139px;
    overflow: hidden;
    scrollbar-width: none;
  }

  .list option {
    height: 23px;
    min-height: 23px;
    padding: 0 3px;
    line-height: 20px;
    color: #000;
  }

  .list option:checked {
    background: #3399ff linear-gradient(#3399ff, #3399ff);
    color: #fff;
  }

  .sb {
    display: flex;
    flex-direction: column;
    width: 24px;
    margin: 1px 0;
    background: #f0f0f0;
  }

  .sb .sb-btn {
    width: 24px;
    height: 24px;
    color: #111;
  }

  .sb .sb-btn:last-child {
    margin-top: auto;
  }

  .sb.off .sb-btn {
    color: #888;
  }

  .live .sb-btn,
  .sb-thumb {
    background: linear-gradient(90deg, #fafafa, #d8d8d8);
    border: 1px solid #999;
    border-radius: 2px;
  }

  .sb-thumb {
    display: flex;
    align-items: center;
    justify-content: center;
    height: 27px;
    margin-top: 2px;
  }

  .sb-thumb.dark {
    height: 23px;
    margin-top: 40px;
    background: #9fa8cc;
    border-color: #446;
  }

  .dropdown {
    position: relative;
    height: 37px;
  }

  .dropdown select {
    width: 100%;
    height: 100%;
    padding: 0 0 1px 4px;
    appearance: none;
    border: 1px solid #a5a5a5;
  }

  .face svg {
    fill: #000;
  }

  .dropdown .face,
  .color-pick .face {
    display: flex;
    align-items: center;
    justify-content: center;
    width: 26px;
    background: linear-gradient(#f4f4f4 45%, #e2e2e2 50%, #d0d0d0);
    border: 1px solid #777;
  }

  .dropdown .face {
    position: absolute;
    top: 1px;
    right: 0;
    bottom: 1px;
    pointer-events: none;
  }

  .color-pick {
    align-items: stretch;
    justify-content: space-between;
    height: 33px;
    margin-top: 2px;
    border: 1px solid #a5a5a5;
  }

  .swatch {
    flex: 1;
    margin: 5px;
    background: #000;
  }

  .field:nth-child(n + 4) label {
    margin-bottom: 5px;
  }

  .check {
    display: flex;
    align-items: center;
    gap: 6px;
    line-height: 24px;
  }

  .check input {
    flex: none;
    width: 19px;
    height: 19px;
    appearance: none;
    background: linear-gradient(135deg, #c4c8cc, #fafafa);
    border: 1px solid #8e8f8f;
    box-shadow: inset 0 0 0 2px #f4f4f4;
  }

  .check .mixed {
    background: linear-gradient(135deg, #6cc4dc, #15608e);
    box-shadow:
      inset 0 0 0 2px #f4f4f4,
      inset 0 0 0 3px #1c3a5c;
  }

  .check.normal {
    align-self: end;
    height: 37px;
  }

  fieldset {
    min-width: 0;
    height: 141px;
    margin: 1px 0 0;
    padding: 14px 12px 0;
    border: 1px solid #d5dfe5;
    border-radius: 5px;
  }

  legend {
    margin-left: -7px;
    padding: 0 2px;
  }

  fieldset .check + .check {
    margin-top: 11px;
  }

  .preview {
    grid-column: span 2;
    padding: 13px 12px 0 13px;
  }

  .sample {
    height: 97px;
    border: 1px solid #555;
  }

  .panel p {
    margin: 57px 0 0;
    line-height: 24px;
  }

  .actions {
    display: flex;
    justify-content: flex-end;
    gap: 16px;
    padding-top: 17px;
  }

  .actions button {
    width: 111px;
    height: 37px;
    padding-bottom: 2px;
    background: linear-gradient(#f4f4f4 45%, #e0e0e0 50%, #d0d0d0);
    border: 1px solid #707070;
    border-radius: 4px;
    box-shadow: inset 0 0 0 1px #fcfcfc;
  }

  .actions .ok {
    border: 2px solid #3c8fb0;
    box-shadow: inset 0 0 0 2px #7fe0f5;
  }

  .halo {
    position: absolute;
    top: 203px;
    left: 478px;
    width: 88px;
    height: 88px;
    border-radius: 50%;
    background: rgba(255, 110, 110, 0.5);
    pointer-events: none;
  }

  .pointer {
    position: absolute;
    top: 246px;
    left: 521px;
  }

  /* taskbar */
  .taskbar {
    position: relative;
    display: flex;
    height: 28px;
    overflow: hidden;
    background:
      linear-gradient(90deg, transparent 12%, rgba(155, 190, 225, 0.8) 14%, rgba(155, 190, 225, 0.8) 55%, transparent 57%) 0 0 / 100% 8px no-repeat,
      linear-gradient(90deg, transparent 12%, rgba(110, 155, 180, 0.7) 14%, rgba(110, 155, 180, 0.7) 55%, transparent 57%) 0 8px / 100% 6px no-repeat,
      linear-gradient(90deg, transparent 12%, rgba(80, 125, 130, 0.6) 14%, rgba(80, 125, 130, 0.6) 55%, transparent 57%) 0 14px / 100% 6px no-repeat,
      linear-gradient(90deg, #2d5c3c, #3c7a4c 8%, #3a6848 12%, #2f5a42 54%, #4d9a5e 60%, #438a54 78%, #2f6b3e 84%, #3f7d4e);
    border-top: 1px solid #2a3a30;
    box-shadow: inset 0 1px #9fc0a8;
  }

  .orb {
    align-items: flex-start;
    margin-right: 19px;
  }

  .task {
    align-items: flex-start;
    width: 88px;
    padding-top: 8px;
  }

  .task.open {
    background: linear-gradient(135deg, rgba(255, 255, 255, 0.75), rgba(255, 255, 255, 0.35));
    border: 1px solid #1c3024;
    border-radius: 3px 3px 0 0;
  }

  .task.pair {
    width: 82px;
    margin-right: 12px;
    background: linear-gradient(135deg, rgba(200, 230, 200, 0.7), rgba(120, 180, 120, 0.5));
  }

  .task:nth-child(3),
  .task:nth-child(4) {
    width: 93px;
    padding-top: 5px;
    padding-right: 7px;
  }

  .task:last-of-type {
    width: 100px;
  }

  .tray {
    display: flex;
    gap: 10px;
    margin-left: auto;
    padding-top: 9px;
    color: #fff;
  }

  .tray .lang {
    width: 20px;
    padding-top: 7px;
    font: 14px/20px 'Liberation Sans', sans-serif;
  }

  .tray .badge {
    width: 24px;
    height: 24px;
    margin-top: 4px;
    border-radius: 50%;
    background: #fff;
    color: #1c6fd0;
    font-size: 10px;
    font-weight: 700;
    line-height: 24px;
    text-align: center;
  }

  .tray .clock {
    width: 8px;
    margin-left: 30px;
    line-height: 16px;
  }

  .ime {
    position: absolute;
    right: 0;
    bottom: 37px;
    display: flex;
    align-items: center;
    width: 157px;
    height: 38px;
    background: #fff;
    border: 1px solid #a9cdf2;
    border-right: 0;
  }

  .ime .logo {
    flex: none;
    width: 50px;
    height: 50px;
    margin: 0 11px 0 -26px;
    border: 3px solid #1478cc;
    border-radius: 50%;
    background: #fff;
    color: #1478cc;
    font-size: 16px;
    font-weight: 700;
    line-height: 44px;
    text-align: center;
  }

  .ime .mode {
    margin-right: 14px;
    color: #1c7fe0;
    font-size: 22px;
    font-weight: 700;
  }

  .ime svg {
    margin-right: 14px;
  }
</style>
